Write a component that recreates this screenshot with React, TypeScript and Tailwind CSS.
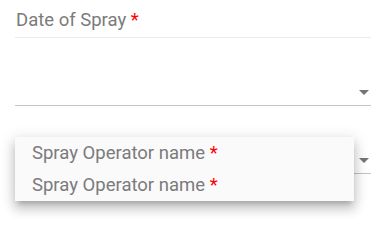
import React from 'react'

const font = { fontFamily: 'Roboto, "Liberation Sans", sans-serif' }

function Arrow() {
  return (
    <svg width="10" height="5" viewBox="0 0 10 5" className="shrink-0">
      <path d="M0 0h10L5 5z" fill="#757575" />
    </svg>
  )
}

function Label({ text }: { text: string }) {
  return (
    <span className="text-[18.5px] leading-none text-[#7b7b7b]">
      {text} <span className="text-[#f00]">*</span>
    </span>
  )
}

function SelectField() {
  return (
    <div className="flex h-[68px] items-end justify-end border-b border-[#c4c4c4] pb-[10px] pr-[2px]">
      <Arrow />
    </div>
  )
}

export default function App() {
  return (
    <div className="relative h-[225px] w-[391px] overflow-hidden bg-white" style={font}>
      <div className="pl-[15px] pr-[20px]">
        <div className="flex h-[38px] items-start border-b border-[#ebebeb] pl-[1px] pt-[11px]">
          <Label text="Date of Spray" />
        </div>
        <SelectField />
        <SelectField />
      </div>

      <div className="absolute left-[15px] top-[137px] w-[339px] bg-[#fafafa] shadow-[0_5px_5px_-3px_rgba(0,0,0,0.2),0_8px_10px_1px_rgba(0,0,0,0.14),0_3px_14px_2px_rgba(0,0,0,0.12)]">
        {['Spray Operator name', 'Spray Operator name'].map((t, i) => (
          <div key={i} className="flex h-[32px] items-center pl-[17px]">
            <Label text={t} />
          </div>
        ))}
      </div>
    </div>
  )
}
